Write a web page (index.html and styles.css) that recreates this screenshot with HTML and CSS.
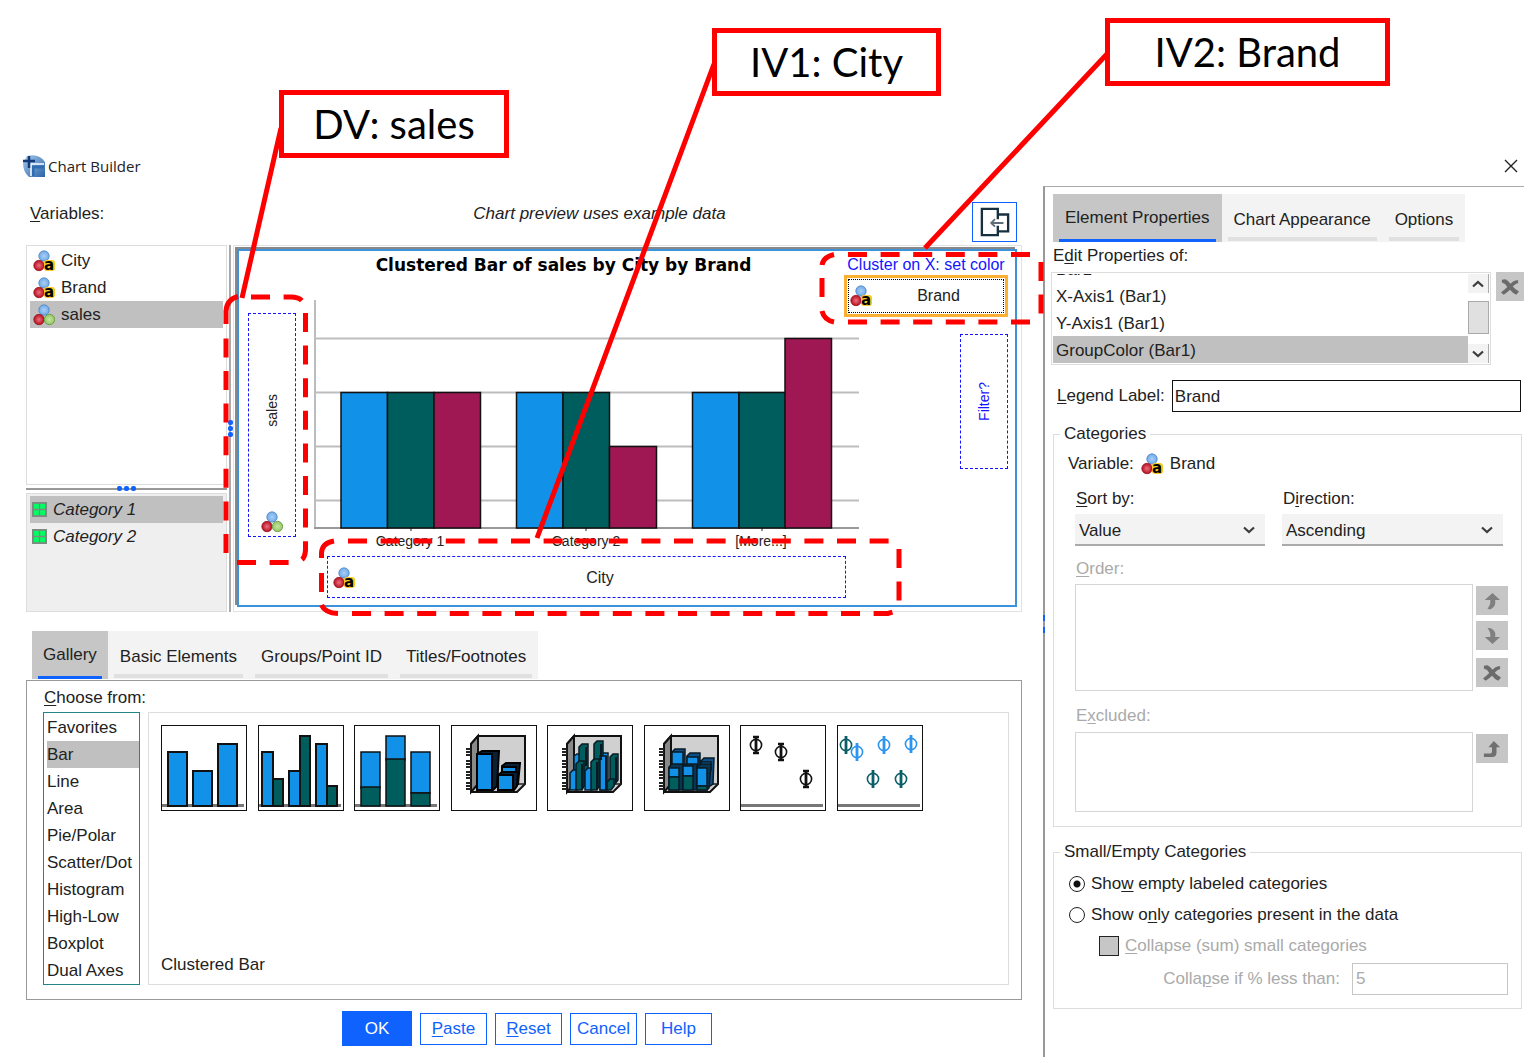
FILE: index.html
```html
<!DOCTYPE html>
<html lang="en">
<head>
  <meta charset="UTF-8">
  <meta name="viewport" content="width=device-width, initial-scale=1.0">
  <title>Chart Builder</title>
  <link rel="stylesheet" href="styles.css">
</head>
<body>
  <!-- shared icons -->
  <svg class="defs" aria-hidden="true">
    <defs>
      <radialGradient id="red"><stop offset="0" stop-color="#f07080"/><stop offset="1" stop-color="#b3101f"/></radialGradient>
      <radialGradient id="blue"><stop offset="0" stop-color="#a9d0f7"/><stop offset="1" stop-color="#6fa9e6"/></radialGradient>
      <radialGradient id="green"><stop offset="0" stop-color="#c6e6a0"/><stop offset="1" stop-color="#93c564"/></radialGradient>
      <linearGradient id="logo" x1="0" y1="0" x2="1" y2="1"><stop offset="0" stop-color="#a9cdee"/><stop offset="1" stop-color="#2a62a8"/></linearGradient>
    </defs>
    <symbol id="nominal" viewBox="0 0 22 22">
      <circle cx="11" cy="6" r="5.200" fill="url(#blue)" stroke="#4a86c8" stroke-width=".8"/>
      <circle cx="6" cy="15.500" r="5.200" fill="url(#red)" stroke="#9c1420" stroke-width=".8"/>
      <circle cx="16.500" cy="15.500" r="5.200" fill="url(#green)" stroke="#5f9a38" stroke-width=".8"/>
    </symbol>
    <symbol id="string" viewBox="0 0 22 22">
      <circle cx="11" cy="6" r="5.200" fill="url(#blue)" stroke="#4a86c8" stroke-width=".8"/>
      <circle cx="6" cy="15.500" r="5.200" fill="url(#red)" stroke="#9c1420" stroke-width=".8"/>
      <rect x="11" y="10" width="11" height="11" rx="3" fill="#fbc926"/>
      <text x="11" y="20" class="icon-letter">a</text>
    </symbol>
    <symbol id="category" viewBox="0 0 16 16">
      <rect x="1" y="1" width="14" height="14" fill="#00ff62" stroke="#7c8a80" stroke-width="2"/>
      <path d="M8 1v14M1 8h14" stroke="#7c8a80" stroke-width="1.4"/>
    </symbol>
    <symbol id="delete" viewBox="0 0 20 20">
      <path d="M1 2L5 1.500Q8 3 10.500 6.500Q14 3 17 2.500H19V5.500Q16 6.500 13 9.500Q16 13 20 15L17 18.500Q13 17 10 13Q7 16 3 18.500L0 16Q4 13 7 10Q5 6 1 5Z" fill="#6b6b6b"/>
    </symbol>
    <symbol id="up" viewBox="0 0 20 20">
      <path d="M10.500 1L19 9H13.500Q15 16 8 19.500L5 18.500Q9 14 8 9H2Z" fill="#808080"/>
    </symbol>
    <symbol id="down" viewBox="0 0 20 20">
      <path d="M10.500 19L19 11H13.500Q15 4 8 1L5 1.500Q9 6 8 11H2Z" fill="#808080"/>
    </symbol>
    <symbol id="chevron" viewBox="0 0 12 8">
      <path d="M1 1.500L6 6L11 1.500" fill="none" stroke="#3c3c3c" stroke-width="2.200"/>
    </symbol>
    <symbol id="phi" viewBox="0 0 14 18">
      <circle cx="7" cy="9" r="5.600" fill="none" stroke="currentColor" stroke-width="1.600"/>
      <path d="M7 0V18" stroke="currentColor" stroke-width="2.800"/>
    </symbol>
    <symbol id="room" viewBox="0 0 60 60">
      <path d="M9 9L16 1H63V49L55 57H9Z" fill="#d0d0d0" stroke="#111" stroke-width="2"/>
      <path d="M9 9L16 1V49L9 57Z" fill="#8a8a8a" stroke="#111" stroke-width="2"/>
      <path d="M4 14H9M4 17H9M4 20H9M4 26H9M4 29H9M4 32H9M4 37H9M4 40H9M4 43H9M4 48H9M4 51H9M4 54H9" stroke="#222" stroke-width="2"/>
      <path d="M16 49H63" stroke="#222" stroke-width="1.500"/>
    </symbol>
  </svg>

  <main class="dialog">
    <header class="titlebar">
      <svg class="logo" viewBox="0 0 22 22">
        <path d="M4 1Q16-2 22 7V22H6Q0 17 0 8Z" fill="url(#logo)"/>
        <path d="M10 21V12H21" fill="none" stroke="#2f6cb0" stroke-width="3"/>
        <path d="M8 21V9H21" fill="none" stroke="#fff" stroke-width="1.500"/>
        <path d="M6 1V13M0 6H12" fill="none" stroke="#123a78" stroke-width="2.500"/>
      </svg>
      <span class="title">Chart Builder</span>
      <button class="close" aria-label="Close"><svg viewBox="0 0 14 14"><path d="M1 1L13 13M13 1L1 13" stroke="#222" stroke-width="1.400"/></svg></button>
    </header>

    <div class="content">
      <section class="left">
        <div class="left-head">
          <span class="var-label"><u>V</u>ariables:</span>
          <em class="hint">Chart preview uses example data</em>
          <button class="collapse" aria-label="Collapse panel">
            <svg viewBox="0 0 32 32">
              <path d="M19 8V2H2V30H19V24M19 8H30V26H19M19 8V13M19 20V26" fill="none" stroke="#17303f" stroke-width="2.500"/>
              <path d="M25 17H12M16 13L12 17L16 21" fill="none" stroke="#5d6e7a" stroke-width="2"/>
            </svg>
          </button>
        </div>

        <div class="builder">
          <div class="lists">
            <ul class="list variables">
              <li><svg class="var-icon"><use href="#string"/></svg>City</li>
              <li><svg class="var-icon"><use href="#string"/></svg>Brand</li>
              <li class="selected"><svg class="var-icon"><use href="#nominal"/></svg>sales</li>
            </ul>
            <div class="h-splitter"><i></i><i></i><i></i></div>
            <ul class="list categories">
              <li class="selected"><svg class="cat-icon"><use href="#category"/></svg>Category 1</li>
              <li><svg class="cat-icon"><use href="#category"/></svg>Category 2</li>
            </ul>
          </div>
          <div class="v-splitter"><i></i><i></i><i></i></div>
          <div class="frame">
            <div class="canvas">
              <h1>Clustered Bar of sales by City by Brand</h1>
              <div class="cluster">
                <span>Cluster on X: set color</span>
                <div class="zone-color">
                  <svg class="var-icon"><use href="#string"/></svg>
                  <span>Brand</span>
                </div>
              </div>
              <div class="zone zone-y">
                <span class="rotated">sales</span>
                <svg class="var-icon"><use href="#nominal"/></svg>
              </div>
              <svg class="plot" viewBox="0 0 545 252">
                <path d="M0 38.500H545M0 92.500H545M0 146.500H545M0 200.500H545" stroke="#bdbdbd" stroke-width="2"/>
                <path d="M1 0V228" stroke="#bdbdbd" stroke-width="2"/>
                <path d="M0 228H545" stroke="#999" stroke-width="2"/>
                <path d="M97 228V231M272 228V231M448 228V231" stroke="#222"/>
                <g stroke="#111" stroke-width="1.500">
                  <g fill="#1192e8">
                    <rect x="27" y="92.500" width="46.500" height="135.500"/>
                    <rect x="202.500" y="92.500" width="46.500" height="135.500"/>
                    <rect x="378.500" y="92.500" width="46.500" height="135.500"/>
                  </g>
                  <g fill="#005d5d">
                    <rect x="73.500" y="92.500" width="46.500" height="135.500"/>
                    <rect x="249" y="92.500" width="46.500" height="135.500"/>
                    <rect x="425" y="92.500" width="46.500" height="135.500"/>
                  </g>
                  <g fill="#9f1853">
                    <rect x="120" y="92.500" width="46.500" height="135.500"/>
                    <rect x="295.500" y="146.500" width="47" height="81.500"/>
                    <rect x="471" y="38.500" width="46.500" height="189.500"/>
                  </g>
                </g>
                <g class="axis-text">
                  <text x="96" y="246">Category 1</text>
                  <text x="272" y="246">Category 2</text>
                  <text x="447" y="246">[More...]</text>
                </g>
              </svg>
              <div class="zone zone-filter"><span class="rotated">Filter?</span></div>
              <div class="zone zone-x">
                <svg class="var-icon"><use href="#string"/></svg>
                <span>City</span>
              </div>
            </div>
          </div>
        </div>

        <nav class="tabs">
          <button class="tab active">Gallery</button>
          <button class="tab">Basic Elements</button>
          <button class="tab">Groups/Point ID</button>
          <button class="tab">Titles/Footnotes</button>
        </nav>
        <div class="panel">
          <div class="panel-label"><u>C</u>hoose from:</div>
          <div class="panel-body">
            <ul class="types">
              <li>Favorites</li>
              <li class="selected">Bar</li>
              <li>Line</li>
              <li>Area</li>
              <li>Pie/Polar</li>
              <li>Scatter/Dot</li>
              <li>Histogram</li>
              <li>High-Low</li>
              <li>Boxplot</li>
              <li>Dual Axes</li>
            </ul>
            <div class="gallery">
              <div class="thumbs">
                <button class="thumb" aria-label="Simple Bar">
                  <svg viewBox="0 0 84 84">
                    <path d="M0 79.500H82" stroke="#777" stroke-width="3"/>
                    <g fill="#1192e8" stroke="#111" stroke-width="2"><rect x="6" y="26" width="19" height="54"/><rect x="31" y="45" width="19" height="35"/><rect x="56" y="18" width="19" height="62"/></g>
                  </svg>
                </button>
                <button class="thumb" aria-label="Clustered Bar">
                  <svg viewBox="0 0 84 84">
                    <path d="M0 79.500H82" stroke="#777" stroke-width="3"/>
                    <g fill="#1192e8" stroke="#111" stroke-width="2"><rect x="3" y="26" width="11" height="54"/><rect x="30" y="45" width="11" height="35"/><rect x="57" y="18" width="11" height="62"/></g>
                    <g fill="#005d5d" stroke="#111" stroke-width="2"><rect x="14" y="53" width="10" height="27"/><rect x="41" y="10" width="10" height="70"/><rect x="68" y="60" width="10" height="20"/></g>
                  </svg>
                </button>
                <button class="thumb" aria-label="Stacked Bar">
                  <svg viewBox="0 0 84 84">
                    <path d="M0 79.500H82" stroke="#777" stroke-width="3"/>
                    <g fill="#1192e8" stroke="#111" stroke-width="1.500"><rect x="6" y="26" width="19" height="36"/><rect x="31" y="10" width="19" height="24"/><rect x="56" y="26" width="19" height="41"/></g>
                    <g fill="#005d5d" stroke="#111" stroke-width="1.500"><rect x="6" y="61" width="19" height="19"/><rect x="31" y="33" width="19" height="47"/><rect x="56" y="67" width="19" height="13"/></g>
                  </svg>
                </button>
                <button class="thumb" aria-label="Simple 3-D Bar">
                  <svg viewBox="0 0 84 84">
                    <use href="#room" x="10" y="9" width="60" height="60"/>
                    <g stroke="#000" stroke-width="2">
                      <path d="M25 28L30 25H47L45 60L41 64H25Z" fill="#0a2036"/>
                      <path d="M50 40L54 37H68L66 58L60 64H50Z" fill="#0a2036"/>
                      <rect x="50" y="41" width="14" height="6" fill="#1192e8"/>
                      <path d="M46 49L50 46H66L65 60L62 64H46Z" fill="#0a2036"/>
                      <rect x="25" y="28" width="15" height="36" fill="#1192e8"/>
                      <rect x="46" y="49" width="15" height="15" fill="#1192e8"/>
                    </g>
                  </svg>
                </button>
                <button class="thumb" aria-label="Clustered 3-D Bar">
                  <svg viewBox="0 0 84 84">
                    <use href="#room" x="10" y="9" width="60" height="60"/>
                    <g stroke="#0a1a24" stroke-width="1.500">
                      <path d="M26 30L29 28H33V60H26ZM52 30L55 27H60V64H52Z" fill="#1192e8"/>
                      <path d="M31 21L34 18H40V60H31ZM46 18L49 15H55V60H46ZM62 31L65 28H70V54L64 62H62Z" fill="#005d5d"/>
                      <path d="M22 47L25 44H29V64H22ZM37 45L40 42H44V64H37ZM52 30H58V64H52Z" fill="#1192e8"/>
                      <path d="M28 38L31 35H36V60L34 64H28ZM43 36L46 33H51V60L49 64H43ZM59 56L62 53H66V60L63 64H59Z" fill="#005d5d"/>
                      <path d="M34 38V64M49 36V64M58 30V64M38 21V40M53 18V34M68 31V56" stroke-width="2"/>
                    </g>
                  </svg>
                </button>
                <button class="thumb" aria-label="Stacked 3-D Bar">
                  <svg viewBox="0 0 84 84">
                    <use href="#room" x="10" y="9" width="60" height="60"/>
                    <g stroke="#0a1a24" stroke-width="1.500">
                      <path d="M27 26L30 23H40V44H27ZM42 30L45 27H55V46H42ZM56 35L59 32H69L68 58L62 62H56Z" fill="#0d4f86"/>
                      <path d="M27 26H38V40H27ZM42 31H53V40H42ZM56 36H66V44H56Z" fill="#1192e8"/>
                      <path d="M24 41L27 38H38V64H24ZM38 41L41 38H52V64H38ZM52 41L56 38H66L64 62L62 64H52Z" fill="#083552"/>
                      <path d="M24 42H34V51H24ZM38 40H48V50H38ZM52 42H62V60H52Z" fill="#1192e8"/>
                      <path d="M24 51H34V64H24ZM38 50H48V64H38ZM52 60H62V64H52Z" fill="#005d5d"/>
                    </g>
                  </svg>
                </button>
                <button class="thumb" aria-label="Simple Error Bar">
                  <svg viewBox="0 0 84 84" color="#111">
                    <path d="M0 79.500H82" stroke="#777" stroke-width="3"/>
                    <use href="#phi" x="8" y="10" width="14" height="18"/>
                    <use href="#phi" x="33" y="17" width="14" height="18"/>
                    <use href="#phi" x="58" y="44" width="14" height="18"/>
                    <path d="M12 11H18M12 27H18M37 18H43M37 34H43M62 45H68M62 61H68" stroke="#111" stroke-width="2.500"/>
                  </svg>
                </button>
                <button class="thumb" aria-label="Clustered Error Bar">
                  <svg viewBox="0 0 84 84" color="#2b95f0">
                    <path d="M0 79.500H82" stroke="#777" stroke-width="3"/>
                    <use href="#phi" x="12" y="17" width="14" height="18"/>
                    <use href="#phi" x="39" y="10" width="14" height="18"/>
                    <use href="#phi" x="66" y="9" width="14" height="18"/>
                    <g color="#0b5e68">
                      <use href="#phi" x="1" y="10" width="14" height="18"/>
                      <use href="#phi" x="28" y="44" width="14" height="18"/>
                      <use href="#phi" x="56" y="44" width="14" height="18"/>
                    </g>
                  </svg>
                </button>
              </div>
              <div class="thumb-name">Clustered Bar</div>
            </div>
          </div>
        </div>

        <footer class="actions">
          <button class="btn primary">OK</button>
          <button class="btn"><u>P</u>aste</button>
          <button class="btn"><u>R</u>eset</button>
          <button class="btn">Cancel</button>
          <button class="btn">Help</button>
        </footer>
      </section>

      <aside class="right">
        <i class="grip"></i>
        <nav class="tabs">
          <button class="tab active">Element Properties</button>
          <button class="tab">Chart Appearance</button>
          <button class="tab">Options</button>
        </nav>
        <div class="edit-label">E<u>d</u>it Properties of:</div>
        <div class="edit-row">
          <div class="edit-box">
            <ul class="edit-list">
              <li>Bar1</li>
              <li>X-Axis1 (Bar1)</li>
              <li>Y-Axis1 (Bar1)</li>
              <li class="selected">GroupColor (Bar1)</li>
            </ul>
            <div class="scrollbar">
              <button aria-label="Scroll up"><svg class="flip"><use href="#chevron"/></svg></button>
              <div class="thumb-bar"></div>
              <button aria-label="Scroll down"><svg><use href="#chevron"/></svg></button>
            </div>
          </div>
          <button class="tool clipped" aria-label="Remove element"><svg><use href="#delete"/></svg></button>
        </div>
        <div class="legend-row">
          <label for="legend-label"><u>L</u>egend Label:</label>
          <input type="text" id="legend-label" value="Brand">
        </div>

        <fieldset class="group">
          <legend>Categories</legend>
          <div class="variable-row">Variable: <svg class="var-icon"><use href="#string"/></svg> Brand</div>
          <div class="selects">
            <div class="field sort">
              <label for="sort"><u>S</u>ort by:</label>
              <div class="select">
                <select id="sort"><option>Value</option></select>
                <svg><use href="#chevron"/></svg>
              </div>
            </div>
            <div class="field direction">
              <label for="direction">D<u>i</u>rection:</label>
              <div class="select">
                <select id="direction"><option>Ascending</option></select>
                <svg><use href="#chevron"/></svg>
              </div>
            </div>
          </div>
          <div class="muted order-label"><u>O</u>rder:</div>
          <div class="box-row">
            <div class="box order"></div>
            <div class="tools">
              <button class="tool" aria-label="Move up"><svg><use href="#up"/></svg></button>
              <button class="tool" aria-label="Move down"><svg><use href="#down"/></svg></button>
              <button class="tool remove" aria-label="Exclude"><svg><use href="#delete"/></svg></button>
            </div>
          </div>
          <div class="muted excluded-label">E<u>x</u>cluded:</div>
          <div class="box-row">
            <div class="box excluded"></div>
            <div class="tools">
              <button class="tool" aria-label="Include"><svg viewBox="0 0 20 20"><path d="M12 1L19 8H15V14Q15 19 10 19H1V15H8Q10 15 10 13V8H6Z" fill="#707070"/></svg></button>
            </div>
          </div>
        </fieldset>

        <fieldset class="group small">
          <legend>Small/Empty Categories</legend>
          <label class="option"><input type="radio" name="empty" checked><span>Sho<u>w</u> empty labeled categories</span></label>
          <label class="option"><input type="radio" name="empty"><span>Show o<u>n</u>ly categories present in the data</span></label>
          <label class="option indent muted"><input type="checkbox" disabled><span><u>C</u>ollapse (sum) small categories</span></label>
          <div class="collapse-row muted">
            <label for="percent">Colla<u>p</u>se if % less than:</label>
            <input type="text" id="percent" value="5" disabled>
          </div>
        </fieldset>
      </aside>
    </div>
  </main>

  <!-- callouts drawn over the dialog -->
  <svg class="marks" width="1536" height="1063" aria-hidden="true">
    <path d="M281 128L242 298M714 64L537 538M1107 54L925 248"/>
    <path d="M226 324V311Q227 299 238 296.500M321.500 558V553Q322 543 334 541M321.500 605Q325 613 338 613.500M822 265Q823 257 834 254.500M822 311Q824 320 834 322"/>
    <g stroke-dasharray="19 13.6">
      <path d="M226 553V335"/>
      <path d="M251 297H291Q299 297 302 301"/>
      <path d="M305.500 313V550Q305 558 301 560"/>
      <path d="M237 562.500H289"/>
      <path d="M321.500 573V592"/>
      <path d="M348 541H890"/>
      <path d="M899 549V601"/>
      <path d="M352 613.500H888L893 612"/>
      <path d="M822 278V297"/>
      <path d="M848 254.500H1030"/>
      <path d="M848 322H1030"/>
      <path d="M1041 262V314"/>
    </g>
  </svg>
  <div class="callout callout-dv">DV: sales</div>
  <div class="callout callout-iv1">IV1: City</div>
  <div class="callout callout-iv2">IV2: Brand</div>
</body>
</html>
```

FILE: styles.css
```css
* {
  box-sizing: border-box;
}

body {
  margin: 0;
  background-color: #fff;
  color: #222;
  font-family: "Liberation Sans", Arial, sans-serif;
  font-size: 17px;
  line-height: 20px;
  position: relative;
}

button, input, select {
  font: inherit;
  color: inherit;
  margin: 0;
  padding: 0;
  border-radius: 0;
}

ul {
  list-style: none;
  margin: 0;
  padding: 0;
}

svg {
  display: block;
  flex-shrink: 0;
}

u {
  text-underline-offset: 2px;
}

.defs {
  position: absolute;
  width: 0;
  height: 0;
}

.dialog {
  padding: 146px 12px 6px 26px;
}

/* title bar */
.titlebar {
  display: flex;
  align-items: center;
  height: 40px;
  margin-left: -3px;
  padding-right: 6px;
}

.logo {
  width: 22px;
  height: 22px;
}

.title {
  flex: 1;
  margin-left: 3px;
  font-family: "Open Sans", sans-serif;
  font-size: 15px;
}

.close {
  width: 14px;
  height: 14px;
  border: none;
  background: none;
}

.content {
  display: flex;
  gap: 21px;
}

.left {
  flex: 1;
  min-width: 0;
}

.left-head {
  display: flex;
  align-items: center;
  height: 59px;
  padding: 0 5px 3px 4px;
}

.var-label {
  width: 197px;
}

.hint {
  flex: 1;
  text-align: center;
}

.collapse {
  align-self: flex-end;
  display: flex;
  align-items: center;
  justify-content: center;
  width: 45px;
  height: 40px;
  border: 1px solid #0f62fe;
  background-color: #fff;
}

.collapse svg {
  width: 30px;
  height: 30px;
}

/* variable lists */
.builder {
  display: flex;
}

.lists {
  width: 201px;
}

.list {
  padding: 2px 3px;
  border: 1px solid #ddd;
}

.list li {
  display: flex;
  align-items: center;
  height: 27px;
  padding-left: 3px;
  gap: 6px;
}

.selected {
  background-color: #c0c0c0;
}

.variables {
  height: 240px;
  padding-top: 1px;
}

.categories {
  height: 119px;
  background-color: #efefef;
  font-style: italic;
}

.categories li {
  padding-left: 2px;
}

.var-icon {
  width: 22px;
  height: 22px;
}

.cat-icon {
  width: 15px;
  height: 15px;
}

.icon-letter {
  font-family: "DejaVu Sans", sans-serif;
  font-size: 15px;
  font-weight: bold;
  fill: #000;
}

.h-splitter {
  display: flex;
  justify-content: center;
  gap: 2px;
  height: 8px;
  padding-top: 1px;
  background: linear-gradient(#fff 3px, #999 3px, #999 5px, #fff 5px);
}

.h-splitter i, .v-splitter i {
  width: 5px;
  height: 5px;
  border-radius: 2px;
  background-color: #0f62fe;
}

.v-splitter {
  display: flex;
  flex-direction: column;
  align-items: center;
  justify-content: center;
  gap: 1px;
  width: 6px;
  background: linear-gradient(90deg, #fff 2px, #aaa 2px, #aaa 4px, #fff 4px);
}

/* chart preview */
.frame {
  flex: 1;
  padding: 3px 4px 4px 3px;
  border: 1px solid #e2e2e2;
}

.canvas {
  display: grid;
  grid-template-columns: 66px 1fr 149px;
  grid-template-rows: 62px 235px 46px;
  padding: 4px 7px 7px 9px;
  border: 2px solid #3c93dc;
  box-shadow: -2px -2px 0 #888;
}

h1 {
  grid-area: 1 / 1 / 2 / 3;
  margin: 0;
  padding-left: 20px;
  text-align: center;
  font-family: "DejaVu Sans", sans-serif;
  font-size: 17px;
  line-height: 20px;
  color: #000;
}

.cluster {
  grid-area: 1 / 3 / 2 / 4;
  justify-self: end;
  width: 164px;
  color: #1414ff;
  font-size: 16px;
  text-align: center;
  white-space: nowrap;
}

.zone-color {
  display: flex;
  align-items: center;
  height: 42px;
  padding-left: 3px;
  border: 3px solid #fbb034;
  outline: 1px dotted #000;
  outline-offset: -5px;
  background-color: #fff;
  color: #222;
}

.zone-color span, .zone-x span {
  flex: 1;
  text-align: center;
}

.zone {
  display: flex;
  align-items: center;
  border: 1px dashed #1414ff;
}

.zone-y {
  grid-area: 1 / 1 / 3 / 2;
  align-self: end;
  flex-direction: column;
  justify-content: space-between;
  width: 48px;
  height: 224px;
  margin-bottom: 15px;
  padding: 80px 0 3px;
}

.zone-filter {
  grid-area: 2 / 3 / 3 / 4;
  justify-self: end;
  justify-content: center;
  width: 48px;
  height: 135px;
  margin-top: 17px;
  color: #1414ff;
}

.zone-x {
  grid-area: 3 / 2 / 4 / 3;
  align-self: end;
  height: 42px;
  margin: 0 13px;
  padding: 2px 0 0 5px;
  font-size: 16px;
}

.rotated {
  writing-mode: vertical-rl;
  transform: rotate(180deg);
  font-size: 14px;
}

.plot {
  grid-area: 1 / 2 / 3 / 3;
  align-self: end;
  width: 100%;
}

.axis-text {
  font-size: 14px;
  text-anchor: middle;
  fill: #222;
}

/* tabs */
.tabs {
  display: flex;
  height: 48px;
}

.left .tabs {
  margin: 19px 0 1px 6px;
}

.tab {
  position: relative;
  padding: 4px 12px 0;
  border: none;
  background-color: #f3f3f3;
}

.tab::after {
  content: "";
  position: absolute;
  left: 6px;
  right: 6px;
  bottom: 1px;
  height: 4px;
  background-color: #e0e0e0;
}

.tab.active {
  padding: 0 11px;
  background-color: #c6c6c6;
}

.tab.active::after {
  bottom: 0;
  height: 3px;
  background-color: #0f62fe;
}

/* gallery */
.panel {
  height: 320px;
  padding: 7px 12px 14px 16px;
  border: 1px solid #999;
}

.panel-label {
  padding-left: 1px;
}

.panel-body {
  display: flex;
  gap: 8px;
  margin-top: 4px;
}

.types {
  width: 97px;
  padding: 1px 0 0 3px;
  border: 1px solid #23858a;
}

.types li {
  height: 27px;
  line-height: 27px;
  white-space: nowrap;
}

.gallery {
  flex: 1;
  display: flex;
  flex-direction: column;
  justify-content: space-between;
  padding: 12px 12px 9px;
  border: 1px solid #ddd;
}

.thumbs {
  display: flex;
  justify-content: space-between;
  max-width: 762px;
}

.thumb {
  width: 86px;
  height: 86px;
  border: 1px solid #111;
  background-color: #fff;
}

#room {
  overflow: visible;
}

/* bottom buttons */
.actions {
  display: flex;
  align-items: center;
  justify-content: center;
  gap: 8px;
  margin-top: 11px;
  padding-left: 6px;
}

.btn {
  width: 67px;
  height: 32px;
  border: 1px solid #0f62fe;
  background-color: #fff;
  color: #0f62fe;
}

.btn.primary {
  width: 70px;
  height: 35px;
  background-color: #0f62fe;
  color: #fff;
}

/* properties pane */
.right {
  position: relative;
  width: 481px;
  padding: 7px 0 48px 8px;
  border-top: 1px solid #aaa;
  border-left: 2px solid #999;
}

.right .tab.active {
  padding: 0 12px;
}

.grip {
  position: absolute;
  left: -2px;
  top: 428px;
  height: 18px;
  border-left: 2px dashed #0f62fe;
}

.edit-label {
  margin-top: 4px;
}

.edit-row {
  display: flex;
  gap: 5px;
  margin: 6px 0 0 -2px;
}

.edit-box {
  display: flex;
  flex: 1;
  height: 93px;
  padding: 1px;
  border: 1px solid #ddd;
}

.edit-list {
  display: flex;
  flex: 1;
  flex-direction: column;
  justify-content: flex-end;
  overflow: hidden;
}

.edit-list li {
  flex-shrink: 0;
  height: 27px;
  padding-left: 3px;
  line-height: 29px;
}

.scrollbar {
  display: flex;
  flex-direction: column;
  justify-content: space-between;
  width: 21px;
}

.scrollbar button {
  display: flex;
  align-items: center;
  justify-content: center;
  height: 19px;
  border: none;
  border-right: 1px solid #aaa;
  background-color: #f3f3f3;
}

.scrollbar svg, .select svg {
  width: 12px;
  height: 8px;
}

.flip {
  transform: rotate(180deg);
}

.thumb-bar {
  height: 33px;
  margin-top: 6px;
  margin-bottom: 8px;
  border: 1px solid #aaa;
  background-color: #e0e0e0;
}

.tool {
  display: flex;
  align-items: center;
  justify-content: center;
  width: 32px;
  height: 29px;
  border: none;
  background-color: #c6c6c6;
}

.tool svg {
  width: 18px;
  height: 18px;
}

.tool.clipped {
  width: 28px;
}

.legend-row {
  display: flex;
  align-items: center;
  gap: 7px;
  margin: 15px 3px 0 4px;
}

.legend-row input {
  flex: 1;
  min-width: 0;
  height: 32px;
  padding: 2px 0 0 2px;
  border: 1px solid #111;
}

.group {
  min-width: 0;
  height: 403px;
  margin: 12px 2px 0 0;
  padding: 0 13px 0 14px;
  border: 1px solid #ddd;
}

.group legend {
  margin-left: -8px;
  padding: 0 4px;
}

.variable-row {
  display: flex;
  align-items: center;
  gap: 7px;
  height: 22px;
  margin-top: 9px;
}

.selects {
  display: flex;
  gap: 17px;
  margin: 14px 5px 0 7px;
}

.sort {
  width: 190px;
}

.direction {
  flex: 1;
}

.field label {
  display: block;
  margin-bottom: 5px;
  padding-left: 1px;
}

.select {
  position: relative;
}

.select svg {
  position: absolute;
  right: 10px;
  top: 12px;
  pointer-events: none;
}

select {
  appearance: none;
  width: 100%;
  height: 32px;
  padding: 3px 0 0 4px;
  border: none;
  border-bottom: 2px solid #aaa;
  background-color: #f3f3f3;
}

.muted {
  color: #aaa;
}

.order-label {
  margin: 13px 0 5px 8px;
}

.excluded-label {
  margin: 15px 0 6px 8px;
}

.box-row {
  display: flex;
  gap: 3px;
  margin-left: 7px;
}

.box {
  flex: 1;
  border: 1px solid #d5d5d5;
}

.order {
  height: 107px;
}

.excluded {
  height: 80px;
}

.tools {
  display: flex;
  flex-direction: column;
  gap: 6px;
  padding-top: 2px;
}

.tools .remove {
  margin-top: 2px;
}

.group.small {
  height: 167px;
  margin-top: 15px;
}

.option {
  display: flex;
  align-items: center;
  gap: 6px;
  height: 31px;
  padding-left: 1px;
}

.small legend + .option {
  margin-top: 6px;
}

.option input {
  appearance: none;
  width: 16px;
  height: 16px;
  border: 1px solid #222;
  border-radius: 50%;
}

.option input:checked {
  background: radial-gradient(circle, #111 3px, #fff 4px);
}

.option.indent {
  margin-left: 30px;
}

.option.indent input {
  width: 20px;
  height: 20px;
  border-radius: 0;
  background-color: #c6c6c6;
}

.collapse-row {
  display: flex;
  align-items: center;
  justify-content: flex-end;
  gap: 12px;
  margin-top: 2px;
}

.collapse-row input {
  width: 156px;
  height: 32px;
  padding-left: 3px;
  border: 1px solid #c6c6c6;
  background-color: #fff;
}

/* callouts */
.marks {
  position: absolute;
  left: 0;
  top: 0;
  fill: none;
  stroke: #f00;
  stroke-width: 5px;
  pointer-events: none;
}

.callout {
  position: absolute;
  height: 68px;
  border: 5px solid #f00;
  background-color: #fff;
  color: #000;
  font-family: Lato, sans-serif;
  font-size: 40px;
  line-height: 58px;
  text-align: center;
}

.callout-dv {
  left: 279px;
  top: 90px;
  width: 230px;
}

.callout-iv1 {
  left: 712px;
  top: 28px;
  width: 229px;
}

.callout-iv2 {
  left: 1105px;
  top: 18px;
  width: 285px;
}
```
